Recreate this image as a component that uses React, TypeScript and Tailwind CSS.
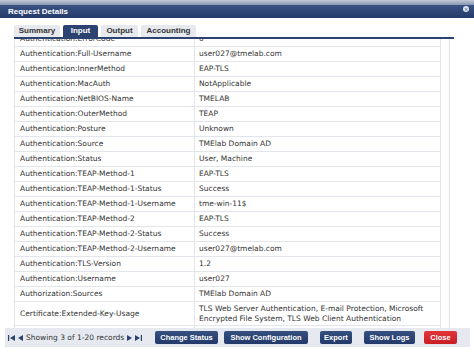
import { ReactNode } from "react";

const rows: [string, ReactNode][] = [
  ["Authentication:ErrorCode", "0"],
  ["Authentication:Full-Username", "user027@tmelab.com"],
  ["Authentication:InnerMethod", "EAP-TLS"],
  ["Authentication:MacAuth", "NotApplicable"],
  ["Authentication:NetBIOS-Name", "TMELAB"],
  ["Authentication:OuterMethod", "TEAP"],
  ["Authentication:Posture", "Unknown"],
  ["Authentication:Source", "TMElab Domain AD"],
  ["Authentication:Status", "User, Machine"],
  ["Authentication:TEAP-Method-1", "EAP-TLS"],
  ["Authentication:TEAP-Method-1-Status", "Success"],
  ["Authentication:TEAP-Method-1-Username", "tme-win-11$"],
  ["Authentication:TEAP-Method-2", "EAP-TLS"],
  ["Authentication:TEAP-Method-2-Status", "Success"],
  ["Authentication:TEAP-Method-2-Username", "user027@tmelab.com"],
  ["Authentication:TLS-Version", "1.2"],
  ["Authentication:Username", "user027"],
  ["Authorization:Sources", "TMElab Domain AD"],
  [
    "Certificate:Extended-Key-Usage",
    <>
      TLS Web Server Authentication, E-mail Protection, Microsoft
      <br />
      Encrypted File System, TLS Web Client Authentication
    </>,
  ],
  ["Certificate:Issuer-CN", "tmelab-DC-01-CA-02"],
  ["Certificate:Issuer-DC", "local"],
];

const tabs = [
  { name: "Summary", w: "w-[46px]" },
  { name: "Input", w: "w-[35px]" },
  { name: "Output", w: "w-[37px]" },
  { name: "Accounting", w: "w-[55px]" },
];

const boldFont = { fontFamily: '"Liberation Sans", Arial, sans-serif' };

function NavIcon({ dir, bar }: { dir: "l" | "r"; bar?: boolean }) {
  return (
    <svg width={bar ? 7 : 5} height="6" viewBox={bar ? "0 0 7 6" : "0 0 5 6"} className="fill-[#2c4270] shrink-0">
      {dir === "l" ? (
        <>
          {bar && <rect x="0" y="0" width="1.2" height="6" />}
          <polygon points={bar ? "7,0 7,6 2,3" : "5,0 5,6 0,3"} />
        </>
      ) : (
        <>
          <polygon points="0,0 0,6 5,3" />
          {bar && <rect x="5.8" y="0" width="1.2" height="6" />}
        </>
      )}
    </svg>
  );
}

function Btn({ children, red, className }: { children: ReactNode; red?: boolean; className: string }) {
  return (
    <button
      style={boldFont}
      className={`shrink-0 h-[13px] rounded-[2px] text-[7.5px] font-bold leading-[13px] text-white whitespace-nowrap text-center ${className} ${
        red ? "bg-gradient-to-b from-[#e2353a] to-[#c71d23]" : "bg-gradient-to-b from-[#36507f] to-[#23396a]"
      }`}
    >
      {children}
    </button>
  );
}

export default function App() {
  return (
    <div
      className="w-[474px] h-[352px] overflow-hidden bg-white flex flex-col text-[#333]"
      style={{ fontFamily: '"DejaVu Sans", Verdana, sans-serif' }}
    >
      {/* title bar */}
      <div className="h-[5px] bg-gradient-to-b from-[#c3cad6] to-[#8796b2]" />
      <div className="h-[13px] bg-gradient-to-b from-[#3a5384] to-[#243a69] flex items-center justify-between pl-[8px] pr-[5px]">
        <span style={boldFont} className="text-[8px] font-bold text-white leading-none">
          Request Details
        </span>
        <span className="w-[6px] h-[6px] -mt-[5px] rounded-full bg-[#dfe5ee] flex items-center justify-center text-[5px] leading-none text-[#2c4270]">
          ×
        </span>
      </div>

      {/* tabs */}
      <div className="mt-[7px] ml-[14px] mr-[20px] flex items-end gap-[3px] border-b-2 border-[#2c4270]">
        {tabs.map((t) => (
          <div
            key={t.name}
            style={boldFont}
            className={`${t.w} shrink-0 h-[12px] text-center text-[8px] font-bold leading-[12px] rounded-t-[2px] whitespace-nowrap ${
              t.name === "Input" ? "bg-[#2c4270] text-white" : "bg-[#e6e9ee] text-[#333]"
            }`}
          >
            {t.name}
          </div>
        ))}
      </div>

      {/* table viewport */}
      <div className="h-[289px] overflow-hidden ml-[14px] mr-[24px] border-r border-[#dde2e9]">
        <div className="-mt-[7px] w-[427px] border-x border-[#e2e6ec] text-[7.5px] leading-[10px]">
          {rows.map(([k, v]) => {
            const tall = k === "Certificate:Extended-Key-Usage";
            return (
              <div key={k} className={`flex border-b border-[#e2e6ec] ${tall ? "h-[24px]" : "h-[15px]"}`}>
                <div className="w-[180px] shrink-0 flex items-center pl-[5px] border-r border-[#e2e6ec] whitespace-nowrap">
                  {k}
                </div>
                <div className="flex-1 flex items-center pl-[4px]">
                  <div>{v}</div>
                </div>
              </div>
            );
          })}
        </div>
      </div>

      {/* footer */}
      <div className="h-[19px] ml-[5px] mr-[4px] bg-[#e6eaf0] flex items-center pl-[3px]">
        <div className="w-[140px] shrink-0 flex items-center gap-[3px] text-[7.5px] text-[#333] whitespace-nowrap">
          <NavIcon dir="l" bar />
          <NavIcon dir="l" />
          <span>Showing 3 of 1-20 records</span>
          <NavIcon dir="r" />
          <NavIcon dir="r" bar />
        </div>
        <Btn className="w-[63px] ml-[7px]">Change Status</Btn>
        <Btn className="w-[84px] ml-[6px]">Show Configuration</Btn>
        <Btn className="w-[32px] ml-[12px]">Export</Btn>
        <Btn className="w-[51px] ml-[12px]">Show Logs</Btn>
        <Btn red className="w-[33px] ml-[9px]">
          Close
        </Btn>
      </div>
    </div>
  );
}
